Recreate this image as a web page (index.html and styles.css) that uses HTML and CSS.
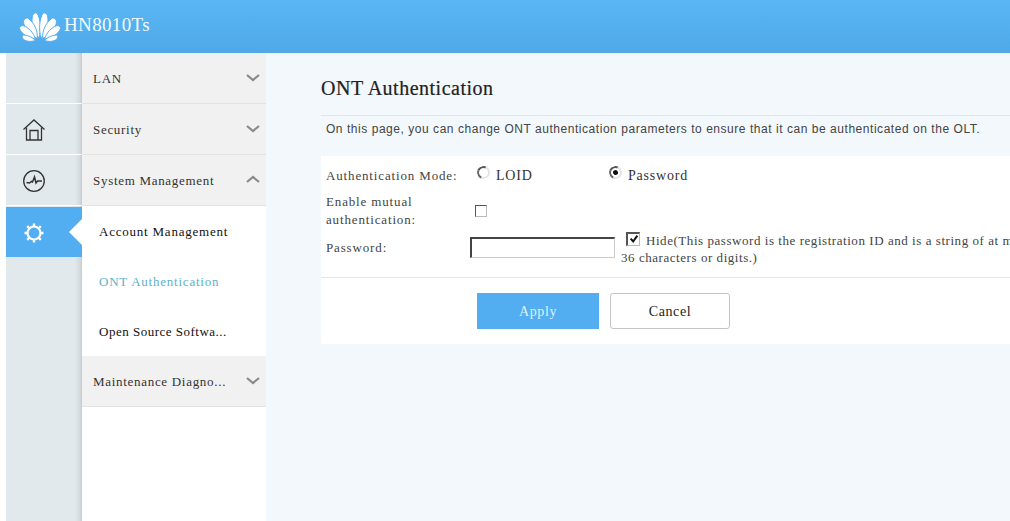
FILE: index.html
```html
<!DOCTYPE html>
<html lang="en">
<head>
<meta charset="utf-8">
<title>ONT Authentication</title>
<link rel="stylesheet" href="styles.css">
</head>
<body>
<header class="top">
  <svg class="logo" viewBox="0 0 42 30" width="42" height="30" aria-hidden="true">
    <g fill="#fff" stroke="#55aff0" stroke-width="1">
      <path d="M20 26 C14 20 12 10 13.500 3.500 C14.500 1.500 16.500 .5 18 1 C21.500 7 22.500 17 20 26Z"/>
      <path d="M22 26 C28 20 30 10 28.500 3.500 C27.500 1.500 25.500 .5 24 1 C20.500 7 19.500 17 22 26Z"/>
      <path d="M18.200 26.500 C10 22.500 4.500 15.500 4.500 9 C5 7 7 5.800 9 6 C15 11 19 18 18.200 26.500Z"/>
      <path d="M23.800 26.500 C32 22.500 37.500 15.500 37.500 9 C37 7 35 5.800 33 6 C27 11 23 18 23.800 26.500Z"/>
      <path d="M16.500 27 C9 26 2.500 22 .5 16.500 C.5 15 2 13.500 4 13.500 C9.500 15.500 14.500 20.500 16.500 27Z"/>
      <path d="M25.500 27 C33 26 39.500 22 41.500 16.500 C41.500 15 40 13.500 38 13.500 C32.500 15.500 27.500 20.500 25.500 27Z"/>
      <path d="M16.500 28.500 C11.500 30 7 29.500 4 27 C3 25.500 3 24 3.800 23 C8.500 23 13.500 25 16.500 28.500Z"/>
      <path d="M25.500 28.500 C30.500 30 35 29.500 38 27 C39 25.500 39 24 38.200 23 C33.500 23 28.500 25 25.500 28.500Z"/>
    </g>
  </svg>
  <span class="model">HN8010Ts</span>
</header>
<div class="shell">
  <nav class="rail">
    <div class="rail-item"></div>
    <div class="rail-item">
      <svg viewBox="0 0 24 24" width="24" height="24" fill="none" stroke="#333" stroke-width="1.300"><path d="M1.500 11.500 12 2l10.500 9.500"/><path d="M4.500 9.500V22h15V9.500"/><path d="M8 22V12.500h8V22"/></svg>
    </div>
    <div class="rail-item">
      <svg viewBox="0 0 24 24" width="24" height="24" fill="none" stroke="#333" stroke-width="1.300"><circle cx="12" cy="12" r="10.300"/><path d="M4.500 13.500l3 .5 2-1.500 1 .5 2-5 1.500 6 1.500-2h4.500" stroke-width="1.500"/></svg>
    </div>
    <div class="rail-item rail-active">
      <svg viewBox="0 0 24 24" width="24" height="24" fill="none" stroke="#fff"><circle cx="12" cy="12" r="6.500" stroke-width="2.200"/><path d="M12 2.500v3.500M12 18v3.500M2.500 12H6M18 12h3.500M5.200 5.200l2.300 2.300M16.500 16.500l2.300 2.300M18.800 5.200l-2.300 2.300M7.500 16.500l-2.300 2.300" stroke-width="2.400"/></svg>
    </div>
  </nav>
  <aside class="menu">
    <div class="group">LAN<svg class="chev" viewBox="0 0 14 8" width="14" height="8"><path d="M1 1l6 5 6-5"/></svg></div>
    <div class="group">Security<svg class="chev" viewBox="0 0 14 8" width="14" height="8"><path d="M1 1l6 5 6-5"/></svg></div>
    <div class="group">System Management<svg class="chev chev-up" viewBox="0 0 14 8" width="14" height="8"><path d="M1 7l6-5 6 5"/></svg></div>
    <div class="sub">Account Management</div>
    <div class="sub sub-current">ONT Authentication</div>
    <div class="sub sub-tight">Open Source Softwa...</div>
    <div class="group">Maintenance Diagno...<svg class="chev" viewBox="0 0 14 8" width="14" height="8"><path d="M1 1l6 5 6-5"/></svg></div>
  </aside>
  <main class="content">
    <h1 class="title">ONT Authentication</h1>
    <p class="desc">On this page, you can change ONT authentication parameters to ensure that it can be authenticated on the OLT.</p>
    <section class="panel">
      <div class="row row-mode">
        <div class="label">Authentication Mode:</div>
        <div class="radios">
          <span class="radio-opt radio-a"><span class="radio"></span>LOID</span>
          <span class="radio-opt"><span class="radio radio-on"></span>Password</span>
        </div>
      </div>
      <div class="row row-mutual">
        <div class="label">Enable mutual<br>authentication:</div>
        <span class="check"></span>
      </div>
      <div class="row row-pass">
        <div class="label label-pass">Password:</div>
        <span class="field"></span>
        <div class="hint">
          <div class="hint-first"><span class="check check-on"><svg viewBox="0 0 12 12" width="10" height="10" fill="none" stroke="#111" stroke-width="2.400"><path d="M2 5.500l3 3.500 5-7"/></svg></span><span class="hint-text">Hide(This password is the registration ID and is a string of at most</span></div>
          <div>36 characters or digits.)</div>
        </div>
      </div>
      <div class="actions">
        <span class="btn btn-apply">Apply</span>
        <span class="btn btn-cancel">Cancel</span>
      </div>
    </section>
  </main>
</div>
</body>
</html>
```
FILE: styles.css
```css
* { box-sizing: border-box; }
html, body { margin: 0; height: 100%; overflow: hidden; }
body {
  width: 1010px;
  height: 521px;
  background: #fff;
  font-family: "Liberation Serif", serif;
  font-size: 13px;
  color: #333;
}
.top {
  height: 53px;
  background: linear-gradient(#5ab6f4, #4fa9e9);
  display: flex;
  align-items: center;
  padding-left: 19px;
  gap: 3px;
}
.logo { display: block; }
.model { color: #f2fbff; font-size: 19px; letter-spacing: 0.35px; margin-top: -3px; }
.shell { display: flex; height: 468px; }
.rail {
  width: 76px;
  margin-left: 6px;
  background: linear-gradient(to right, #e2e9ed 69px, #d3d9dd 74px, #c4cace);
  flex: none;
}
.rail-item {
  height: 51px;
  border-bottom: 1px solid #fff;
  display: flex;
  align-items: center;
  justify-content: center;
  padding: 2px 21px 0 0;
}
.rail-item svg { display: block; }
.rail-active {
  height: 50px;
  margin-top: 1px;
  background: #52aef0;
  border: 0;
  position: relative;
  padding: 1px 21px 0 0;
}
.rail-active::after {
  content: "";
  position: absolute;
  right: 0;
  top: 12px;
  border-style: solid;
  border-width: 13px 13px 13px 0;
  border-color: transparent #fff transparent transparent;
}
.menu { width: 184px; background: #fff; flex: none; }
.group {
  height: 51px;
  background: #f1f1f1;
  border-bottom: 1px solid #e3e3e3;
  display: flex;
  align-items: center;
  justify-content: space-between;
  padding: 1px 6px 0 11px;
  letter-spacing: 0.7px;
  color: #333;
}
.chev { fill: none; stroke: #8a8a8a; stroke-width: 2.200; display: block; margin-top: -1px; }
.chev-up { margin-top: -3px; }
.sub {
  height: 50px;
  background: #fff;
  display: flex;
  align-items: center;
  padding: 1px 0 0 17px;
  letter-spacing: 0.78px;
  color: #111;
}
.sub-current { color: #5cb1c8; }
.sub-tight { letter-spacing: 0.5px; }
.content {
  flex: 1;
  min-width: 0;
  background: #f3f8fc;
  padding: 24px 0 0 55px;
  overflow: hidden;
}
.title {
  margin: 0;
  font-size: 20px;
  font-weight: normal;
  color: #222;
  letter-spacing: 0.5px;
  line-height: 22px;
  height: 39px;
  border-bottom: 1px solid #e1e5e8;
  -webkit-text-stroke: 0.2px #222;
}
.desc {
  margin: 0;
  padding: 5px 0 0 5px;
  height: 40px;
  font-family: "Liberation Sans", sans-serif;
  font-size: 12px;
  line-height: 16px;
  letter-spacing: 0.54px;
  white-space: nowrap;
  color: #444;
}
.panel { background: #fff; height: 188px; width: 689px; overflow: hidden; }
.row { display: flex; position: relative; }
.label { width: 5px; flex: none; margin-left: 5px; white-space: nowrap; letter-spacing: 0.85px; color: #444; line-height: 18px; }
.label-pass { margin-top: 2px; }
.row-mode { height: 37px; padding-top: 11px; }
.radios { display: flex; margin-left: 146px; font-size: 14px; letter-spacing: 0.8px; color: #333; }
.radio-opt { display: flex; align-items: flex-start; line-height: 18px; }
.radio-a { width: 132px; }
.radio {
  width: 13px;
  height: 13px;
  margin: -1px 6px 0 0;
  border-radius: 50%;
  background: #fff;
  border: 2px solid #e4e4e4;
  border-top-color: #555;
  border-left-color: #666;
  position: relative;
  transform: rotate(-20deg);
}
.radio-on::after {
  content: "";
  position: absolute;
  left: 2px;
  top: 2px;
  width: 5px;
  height: 5px;
  border-radius: 50%;
  background: #111;
}
.row-mutual { height: 36px; align-items: center; }
.row-mutual .check { margin-left: 144px; width: 12px; height: 12px; }
.check {
  display: inline-flex;
  align-items: center;
  justify-content: center;
  width: 14px;
  height: 14px;
  background: #fff;
  border: 1px solid #bbb;
  border-top-color: #555;
  border-left-color: #555;
  flex: none;
}
.check-on { border-width: 2px 1px 1px 2px; margin: -4px 6px 0 5px; }
.row-pass { height: 49px; border-bottom: 1px solid #e6e6e6; padding-top: 8px; }
.field {
  width: 145px;
  height: 21px;
  margin-left: 139px;
  background: #fff;
  border: 1px solid #ccc;
  border-top: 2px solid #444;
  border-left: 2px solid #444;
  flex: none;
}
.hint { margin: -5px 0 0 6px; white-space: nowrap; letter-spacing: 0.55px; line-height: 17px; color: #444; }
.hint-first { display: flex; align-items: center; }
.actions { display: flex; padding: 15px 0 0 156px; gap: 11px; }
.btn {
  height: 36px;
  display: flex;
  align-items: center;
  justify-content: center;
  padding-top: 1px;
  letter-spacing: 0.6px;
  font-size: 14px;
}
.btn-apply { width: 122px; background: #52aef0; color: #dff2ff; }
.btn-cancel { width: 120px; background: #fff; border: 1px solid #c4c4c4; border-radius: 3px; color: #222; }
```
